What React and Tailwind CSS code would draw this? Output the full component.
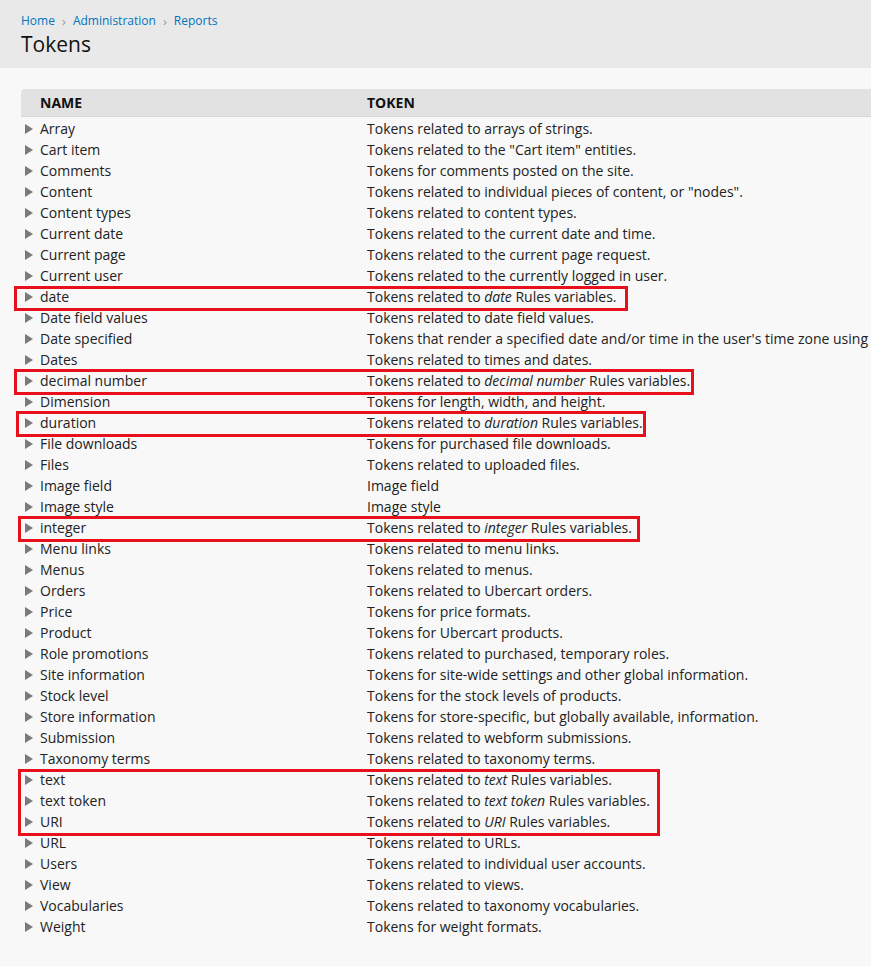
import React from "react";

const rows = [
  ["Array", "Tokens related to arrays of strings."],
  ["Cart item", 'Tokens related to the "Cart item" entities.'],
  ["Comments", "Tokens for comments posted on the site."],
  ["Content", 'Tokens related to individual pieces of content, or "nodes".'],
  ["Content types", "Tokens related to content types."],
  ["Current date", "Tokens related to the current date and time."],
  ["Current page", "Tokens related to the current page request."],
  ["Current user", "Tokens related to the currently logged in user."],
  ["date", ["Tokens related to ", "date", " Rules variables."]],
  ["Date field values", "Tokens related to date field values."],
  ["Date specified", "Tokens that render a specified date and/or time in the user's time zone using"],
  ["Dates", "Tokens related to times and dates."],
  ["decimal number", ["Tokens related to ", "decimal number", " Rules variables."]],
  ["Dimension", "Tokens for length, width, and height."],
  ["duration", ["Tokens related to ", "duration", " Rules variables."]],
  ["File downloads", "Tokens for purchased file downloads."],
  ["Files", "Tokens related to uploaded files."],
  ["Image field", "Image field"],
  ["Image style", "Image style"],
  ["integer", ["Tokens related to ", "integer", " Rules variables."]],
  ["Menu links", "Tokens related to menu links."],
  ["Menus", "Tokens related to menus."],
  ["Orders", "Tokens related to Ubercart orders."],
  ["Price", "Tokens for price formats."],
  ["Product", "Tokens for Ubercart products."],
  ["Role promotions", "Tokens related to purchased, temporary roles."],
  ["Site information", "Tokens for site-wide settings and other global information."],
  ["Stock level", "Tokens for the stock levels of products."],
  ["Store information", "Tokens for store-specific, but globally available, information."],
  ["Submission", "Tokens related to webform submissions."],
  ["Taxonomy terms", "Tokens related to taxonomy terms."],
  ["text", ["Tokens related to ", "text", " Rules variables."]],
  ["text token", ["Tokens related to ", "text token", " Rules variables."]],
  ["URI", ["Tokens related to ", "URI", " Rules variables."]],
  ["URL", "Tokens related to URLs."],
  ["Users", "Tokens related to individual user accounts."],
  ["View", "Tokens related to views."],
  ["Vocabularies", "Tokens related to taxonomy vocabularies."],
  ["Weight", "Tokens for weight formats."],
];

function Tri() {
  return (
    <svg width="8" height="10" viewBox="0 0 8 10" className="shrink-0">
      <path d="M0 0 L8 5 L0 10 Z" fill="#7a7a7a" />
    </svg>
  );
}

function Desc({ d }) {
  if (Array.isArray(d)) {
    return (
      <>
        {d[0]}
        <em className="italic">{d[1]}</em>
        {d[2]}
      </>
    );
  }
  return d;
}

export default function App() {
  return (
    <div
      className="relative w-[871px] h-[966px] overflow-hidden bg-[#f8f8f8] text-[#222]"
      style={{ fontFamily: '"Open Sans", "Noto Sans", sans-serif' }}
    >
      <div className="h-[68px] bg-[#e9e9e9] pl-[21px] pt-[12px]">
        <div className="flex items-center text-[12px] leading-[18px] text-[#0074bd]">
          <span>Home</span>
          <span className="text-[#999] text-[13px] w-[18px] text-center">›</span>
          <span>Administration</span>
          <span className="text-[#999] text-[13px] w-[18px] text-center">›</span>
          <span>Reports</span>
        </div>
        <h1 className="text-[21px] leading-[28px] font-normal text-[#111]">Tokens</h1>
      </div>

      <div className="pl-[21px] pt-[21px]">
        <div className="w-[900px] text-[14px] leading-[21px] text-[#222] whitespace-nowrap">
          <div className="flex h-[28px] items-center bg-[#e2e2e2] rounded-tl-[4px] border-b border-[#d8d8d8] font-bold text-[14px] text-[#111] uppercase">
            <div className="w-[346px] shrink-0 pl-[19px]">Name</div>
            <div>Token</div>
          </div>
          <div className="pt-[1px]">
            {rows.map(([name, desc]) => (
              <div key={name} className="flex h-[21px] items-center">
                <div className="w-[346px] shrink-0 flex items-center pl-[4px] gap-[7px]">
                  <Tri />
                  <span>{name}</span>
                </div>
                <div>
                  <Desc d={desc} />
                </div>
              </div>
            ))}
          </div>
        </div>
      </div>

      <div className="absolute left-[14px] top-[286px] w-[614px] h-[25px] border-[3px] border-[#e8101a]" />
      <div className="absolute left-[14px] top-[369px] w-[680px] h-[26px] border-[3px] border-[#e8101a]" />
      <div className="absolute left-[16px] top-[411px] w-[630px] h-[26px] border-[3px] border-[#e8101a]" />
      <div className="absolute left-[18px] top-[516px] w-[622px] h-[26px] border-[3px] border-[#e8101a]" />
      <div className="absolute left-[18px] top-[769px] w-[642px] h-[67px] border-[3px] border-[#e8101a]" />
    </div>
  );
}
